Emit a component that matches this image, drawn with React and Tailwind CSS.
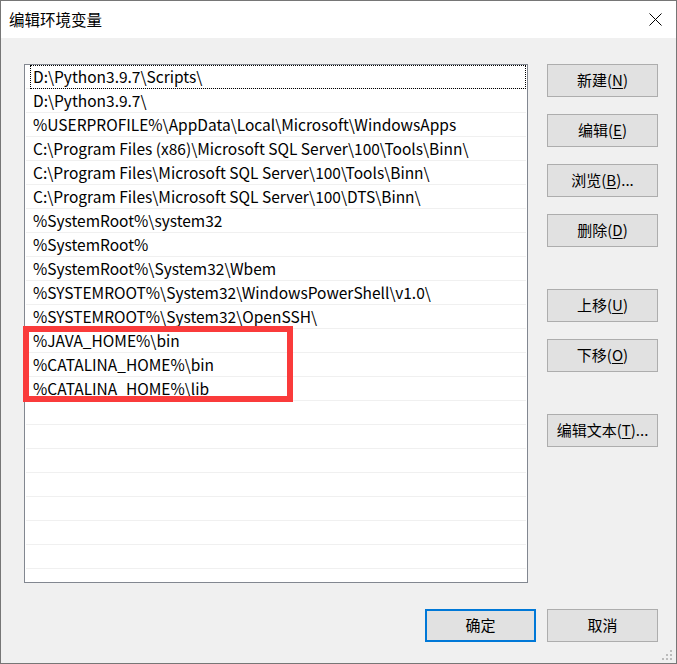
import React from 'react';

const paths = [
  'D:\\Python3.9.7\\Scripts\\',
  'D:\\Python3.9.7\\',
  '%USERPROFILE%\\AppData\\Local\\Microsoft\\WindowsApps',
  'C:\\Program Files (x86)\\Microsoft SQL Server\\100\\Tools\\Binn\\',
  'C:\\Program Files\\Microsoft SQL Server\\100\\Tools\\Binn\\',
  'C:\\Program Files\\Microsoft SQL Server\\100\\DTS\\Binn\\',
  '%SystemRoot%\\system32',
  '%SystemRoot%',
  '%SystemRoot%\\System32\\Wbem',
  '%SYSTEMROOT%\\System32\\WindowsPowerShell\\v1.0\\',
  '%SYSTEMROOT%\\System32\\OpenSSH\\',
  '%JAVA_HOME%\\bin',
  '%CATALINA_HOME%\\bin',
  '%CATALINA_HOME%\\lib',
  '', '', '', '', '', '', '', '',
];

function Btn({ label, hot, after = '', primary = false }) {
  return (
    <button
      className={`w-[111px] h-[33px] bg-[#e1e1e1] text-[15px] text-black flex items-center justify-center ${
        primary ? 'border-2 border-[#0078d7]' : 'border border-[#adadad]'
      }`}
    >
      {label}
      {hot && (
        <>
          (<span className="underline underline-offset-2">{hot}</span>){after}
        </>
      )}
    </button>
  );
}

export default function App() {
  return (
    <div
      className="w-[677px] h-[664px] border border-[#767676] bg-[#f0f0f0] flex flex-col relative overflow-hidden"
      style={{ fontFamily: '"Noto Sans CJK SC", "Noto Sans", sans-serif' }}
    >
      {/* 标题栏 */}
      <div className="h-[37px] bg-white flex items-center justify-between pl-[8px] pr-[14px] shrink-0">
        <span className="text-[15.5px] text-black">编辑环境变量</span>
        <svg width="13" height="13" viewBox="0 0 13 13">
          <path d="M0.5 0.5 L12.5 12.5 M12.5 0.5 L0.5 12.5" stroke="#000" strokeWidth="1" />
        </svg>
      </div>

      <div className="flex pl-[23px] pt-[26px] gap-[19px]">
        {/* 路径列表 */}
        <div className="w-[504px] h-[519px] bg-white border border-[#828790] relative overflow-hidden">
          {paths.map((p, i) => (
            <div
              key={i}
              className="h-[24px] mx-[1px] relative flex items-center pl-[7px] text-[15.5px] text-black whitespace-nowrap border-b border-[#f0f0f0]"
            >
              {p}
              {i === 0 && (
                <div className="absolute left-[4px] right-0 top-0 bottom-[-1px] border border-dotted border-black" />
              )}
            </div>
          ))}
        </div>

        {/* 按钮列 */}
        <div className="flex flex-col">
          <Btn label="新建" hot="N" />
          <div className="h-[17px]" />
          <Btn label="编辑" hot="E" />
          <div className="h-[17px]" />
          <Btn label="浏览" hot="B" after="..." />
          <div className="h-[17px]" />
          <Btn label="删除" hot="D" />
          <div className="h-[42px]" />
          <Btn label="上移" hot="U" />
          <div className="h-[17px]" />
          <Btn label="下移" hot="O" />
          <div className="h-[42px]" />
          <Btn label="编辑文本" hot="T" after="..." />
        </div>
      </div>

      <div className="flex justify-end gap-[11px] pr-[18px] mt-[26px]">
        <Btn label="确定" primary />
        <Btn label="取消" />
      </div>

      {/* 红色标注框 */}
      <div className="absolute left-[22px] top-[325px] w-[270px] h-[76px] border-[6px] border-[#fa3b3b]" />

      {/* 尺寸调整手柄 */}
      <svg className="absolute right-[2px] bottom-[1px]" width="12" height="12" viewBox="0 0 12 12">
        <rect x="8" y="0" width="2" height="2" fill="#bcbcbc" />
        <rect x="4" y="4" width="2" height="2" fill="#bcbcbc" />
        <rect x="8" y="4" width="2" height="2" fill="#bcbcbc" />
        <rect x="0" y="8" width="2" height="2" fill="#bcbcbc" />
        <rect x="4" y="8" width="2" height="2" fill="#bcbcbc" />
        <rect x="8" y="8" width="2" height="2" fill="#bcbcbc" />
      </svg>
    </div>
  );
}
